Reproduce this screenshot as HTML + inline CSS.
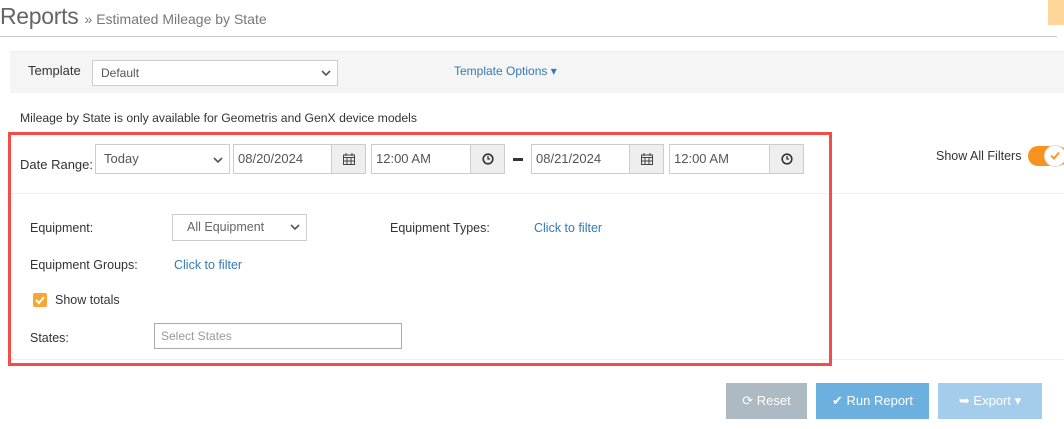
<!DOCTYPE html>
<html><head><meta charset="utf-8"><style>
*{box-sizing:border-box;margin:0;padding:0}
body{width:1064px;height:429px;background:#fff;font-family:"Liberation Sans",Arial,sans-serif;font-size:12.5px;color:#333;position:relative;overflow:hidden}
.a{position:absolute}
.inp{position:absolute;border:1px solid #ccc;background:#fff;color:#555;font-size:13px;padding-left:8px;line-height:28px;height:30px}
.add{position:absolute;border:1px solid #ccc;background:#eee;height:30px;display:flex;align-items:center;justify-content:center}
.lnk{color:#337ab7}
.btn{position:absolute;top:383px;height:36px;color:#fff;font-size:13px;display:flex;align-items:center;justify-content:center;gap:6px}
</style></head><body>
<div class="a" style="left:0;top:3px;font-size:23px;color:#666;letter-spacing:-0.3px">Reports <span style="font-size:14px;color:#777;letter-spacing:0">» Estimated Mileage by State</span></div>
<div class="a" style="left:0;top:36px;width:1057px;height:1px;background:#c8c8c8"></div>
<div class="a" style="left:1048px;top:0;width:16px;height:25px;background:#ffd699"></div>
<div class="a" style="left:10px;top:51px;width:1054px;height:42px;background:#f5f5f5;border-top:1px solid #eee"></div>
<div class="a" style="left:28px;top:63px;font-size:13px;color:#333">Template</div>
<div class="inp" style="left:92px;top:60px;width:246px;height:26px;line-height:24px;font-size:12px">Default<svg class="a" style="right:6px;top:9px" width="10" height="7"><path d="M1 1l4 4 4-4" stroke="#555" stroke-width="1.6" fill="none"/></svg></div>
<div class="a lnk" style="left:454px;top:64px;font-size:12px">Template Options ▾</div>
<div class="a" style="left:20px;top:111px;font-size:12.2px">Mileage by State is only available for Geometris and GenX device models</div>
<div class="a" style="left:10px;top:193px;width:1054px;height:1px;background:#eee"></div>
<div class="a" style="left:10px;top:359px;width:1054px;height:1px;background:#eee"></div>
<div class="a" style="left:8px;top:132px;width:824px;height:234px;border:3px solid #f44b4b"></div>
<div class="a" style="left:20px;top:157px;font-size:13px">Date Range:</div>
<div class="inp" style="left:95px;top:144px;width:135px">Today<svg class="a" style="right:6px;top:12px" width="10" height="7"><path d="M1 1l4 4 4-4" stroke="#555" stroke-width="1.6" fill="none"/></svg></div>
<div class="inp" style="left:233px;top:144px;width:99px;padding-left:4px">08/20/2024</div>
<div class="add" style="left:331px;top:144px;width:35px"><svg width="12" height="12"><rect x="0.5" y="2" width="11" height="9.5" fill="none" stroke="#444"/><path d="M0.5 4.5h11M3 0v3M9 0v3M4 4.5v7M8 4.5v7M0.5 8h11" stroke="#444"/></svg></div>
<div class="inp" style="left:371px;top:144px;width:100px;padding-left:4px">12:00 AM</div>
<div class="add" style="left:470px;top:144px;width:35px"><svg width="12" height="12"><circle cx="6" cy="6" r="4.8" fill="none" stroke="#333" stroke-width="1.6"/><path d="M6 3v3h2" stroke="#333" stroke-width="1.3" fill="none"/></svg></div>
<div class="a" style="left:513px;top:158px;width:10px;height:3px;background:#333"></div>
<div class="inp" style="left:531px;top:144px;width:99px;padding-left:4px">08/21/2024</div>
<div class="add" style="left:629px;top:144px;width:35px"><svg width="12" height="12"><rect x="0.5" y="2" width="11" height="9.5" fill="none" stroke="#444"/><path d="M0.5 4.5h11M3 0v3M9 0v3M4 4.5v7M8 4.5v7M0.5 8h11" stroke="#444"/></svg></div>
<div class="inp" style="left:669px;top:144px;width:101px;padding-left:4px">12:00 AM</div>
<div class="add" style="left:769px;top:144px;width:35px"><svg width="12" height="12"><circle cx="6" cy="6" r="4.8" fill="none" stroke="#333" stroke-width="1.6"/><path d="M6 3v3h2" stroke="#333" stroke-width="1.3" fill="none"/></svg></div>
<div class="a" style="left:936px;top:149px;font-size:12.5px">Show All Filters</div>
<div class="a" style="left:1028px;top:146px;width:40px;height:20px;border-radius:10px;background:#f7931e"></div>
<div class="a" style="left:1044px;top:145px;width:22px;height:22px;border-radius:11px;background:#fff;border:1px solid #ddd"><svg class="a" style="left:5px;top:5px" width="10" height="9"><path d="M1 4.5l3 3 5-6" stroke="#f7931e" stroke-width="1.8" fill="none"/></svg></div>
<div class="a" style="left:30px;top:221px">Equipment:</div>
<div class="inp" style="left:172px;top:214px;width:135px;height:27px;line-height:25px;font-size:12.5px;padding-left:14px;color:#666">All Equipment<svg class="a" style="right:6px;top:9px" width="10" height="7"><path d="M1 1l4 4 4-4" stroke="#555" stroke-width="1.6" fill="none"/></svg></div>
<div class="a" style="left:390px;top:221px">Equipment Types:</div>
<div class="a lnk" style="left:534px;top:221px">Click to filter</div>
<div class="a" style="left:30px;top:258px">Equipment Groups:</div>
<div class="a lnk" style="left:174px;top:258px">Click to filter</div>
<div class="a" style="left:33px;top:293px;width:14px;height:14px;border-radius:2px;background:#f7a534"><svg class="a" style="left:2px;top:2px" width="10" height="10"><path d="M1 5l3 3 5-6" stroke="#fff" stroke-width="2" fill="none"/></svg></div>
<div class="a" style="left:55px;top:293px">Show totals</div>
<div class="a" style="left:30px;top:331px">States:</div>
<div class="inp" style="left:154px;top:323px;width:248px;height:26px;line-height:24px;font-size:12px;padding-left:6px;color:#999;border-color:#aaa">Select States</div>
<div class="btn" style="left:726px;width:81px;background:#adb9c3">⟳ Reset</div>
<div class="btn" style="left:816px;width:113px;background:#6cb0df">✔ Run Report</div>
<div class="btn" style="left:938px;width:104px;background:#a3cdeb">➥ Export ▾</div>
</body></html>
